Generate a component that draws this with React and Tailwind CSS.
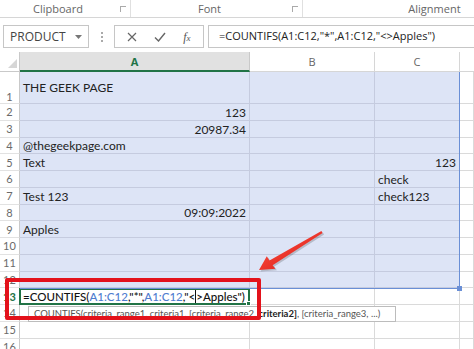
import React from "react";

const cellFont = { fontFamily: "Lato, 'Open Sans', sans-serif" };

const rows = [
  { n: 1, h: "h-[32px]", a: "THE GEEK PAGE", tall: true },
  { n: 2, a: "123", aRight: true },
  { n: 3, a: "20987.34", aRight: true },
  { n: 4, a: "@thegeekpage.com" },
  { n: 5, a: "Text", c: "123", cRight: true },
  { n: 6, c: "check" },
  { n: 7, a: "Test 123", c: "check123" },
  { n: 8, a: "09:09:2022", aRight: true },
  { n: 9, a: "Apples" },
  { n: 10 },
  { n: 11 },
  { n: 12 },
  { n: 13, edit: true },
  { n: 14 },
  { n: 15 },
  { n: 16 },
];

function Cell({ text, right, w, sel, tall }) {
  return (
    <div
      className={`${w} shrink-0 h-full flex ${tall ? "items-center" : "items-end pb-[1px]"} ${
        right ? "justify-end pr-[3px]" : "justify-start pl-[3px]"
      } border-r border-b ${sel ? "bg-[#dde4f6] border-[#c5cbdf]" : "bg-white border-[#dadada]"} text-[12px] text-[#222] leading-none overflow-hidden whitespace-nowrap`}
    >
      {text}
    </div>
  );
}

function EditCell() {
  return (
    <div className="w-[231px] shrink-0 h-full relative bg-white border-2 border-[#217346] -ml-[1px] flex items-center pl-[2px] text-[11.5px] font-medium text-[#111] whitespace-nowrap leading-none">
      <span>=COUNTIFS(</span>
      <span className="text-[#4f7ccf]">A1:C12</span>
      <span>,"*",</span>
      <span className="text-[#4f7ccf]">A1:C12</span>
      <span>,"&lt;</span>
      <span className="inline-block w-[1px] h-[13px] bg-[#111]"></span>
      <span>&gt;Apples")</span>
      <div className="absolute -right-[3px] -bottom-[3px] w-[5px] h-[5px] bg-[#217346] border border-white"></div>
    </div>
  );
}

function Row({ r }) {
  const sel = r.n <= 12;
  return (
    <div className={`flex ${r.h || "h-[16.75px]"}`}>
      <div
        className={`w-[20px] shrink-0 h-full flex ${r.tall ? "items-end pb-[1px]" : "items-center"} justify-center border-r border-b border-r-[#c9c9c9] border-b-[#e2e2e2] bg-white text-[11px] leading-none ${
          r.edit ? "text-[#217346] font-bold" : "text-[#6a6a6a]"
        }`}
      >
        {r.n}
      </div>
      {r.edit ? (
        <EditCell />
      ) : (
        <Cell text={r.a} right={r.aRight} w="w-[230px]" sel={sel} tall={r.tall} />
      )}
      <Cell w="w-[125px]" sel={sel} />
      <Cell text={r.c} right={r.cRight} w="w-[85px]" sel={sel} />
      <Cell w="flex-1" />
    </div>
  );
}

export default function App() {
  return (
    <div
      className="w-[474px] h-[349px] overflow-hidden bg-white relative"
      style={{ fontFamily: "'Open Sans', 'Noto Sans', sans-serif" }}
    >
      {/* ribbon group labels */}
      <div className="h-[18px] flex border-b border-[#d6d6d6] text-[11px] text-[#666] leading-none">
        <div className="w-[131px] flex items-center relative border-r border-[#e0e0e0]">
          <span className="w-full text-center pr-[14px]">Clipboard</span>
          <span className="absolute right-[4px] top-[6px] w-[6px] h-[6px] border-l border-t border-[#aaa]"></span>
        </div>
        <div className="w-[172px] flex items-center relative border-r border-[#e0e0e0]">
          <span className="w-full text-center pr-[14px]">Font</span>
          <span className="absolute right-[4px] top-[6px] w-[6px] h-[6px] border-l border-t border-[#aaa]"></span>
        </div>
        <div className="flex-1 flex items-center">
          <span className="w-full text-center pl-[92px]">Alignment</span>
        </div>
      </div>

      {/* formula bar */}
      <div className="h-[34px] flex items-start pt-[7px] pl-[3px] gap-0">
        <div className="w-[86px] h-[23px] border border-[#c6c6c6] flex items-center justify-between pl-[6px] pr-[6px] text-[12px] text-[#444]">
          <span>PRODUCT</span>
          <svg width="7" height="4" viewBox="0 0 7 4">
            <path d="M0 0 L7 0 L3.5 4 Z" fill="#777" />
          </svg>
        </div>
        <div className="w-[25px] h-[23px] flex flex-col items-center justify-center gap-[2px]">
          <span className="w-[2px] h-[2px] bg-[#aaa]"></span>
          <span className="w-[2px] h-[2px] bg-[#aaa]"></span>
          <span className="w-[2px] h-[2px] bg-[#aaa]"></span>
        </div>
        <div className="w-[90px] h-[23px] border border-[#c6c6c6] flex items-center justify-around px-[4px]">
          <svg width="10" height="10" viewBox="0 0 10 10">
            <path d="M1 1 L9 9 M9 1 L1 9" stroke="#666" strokeWidth="1.2" />
          </svg>
          <svg width="12" height="10" viewBox="0 0 12 10">
            <path d="M1 5.5 L4.5 9 L11 1" stroke="#666" strokeWidth="1.4" fill="none" />
          </svg>
          <span className="text-[12px] text-[#555] italic" style={{ fontFamily: "'Liberation Serif', serif" }}>
            f<span className="text-[9px]">x</span>
          </span>
        </div>
        <div className="flex-1 ml-[4px] h-[23px] border border-[#c6c6c6] border-r-0 flex items-center pl-[10px] text-[11px] text-[#222] whitespace-nowrap">
          =COUNTIFS(A1:C12,"*",A1:C12,"&lt;&gt;Apples")
        </div>
      </div>

      {/* column headers */}
      <div className="flex h-[20px] text-[11px] leading-none">
        <div className="w-[20px] shrink-0 border-r border-b border-[#c9c9c9] relative">
          <svg className="absolute right-[2px] bottom-[3px]" width="9" height="9" viewBox="0 0 9 9">
            <path d="M9 0 L9 9 L0 9 Z" fill="#d6d6d6" />
          </svg>
        </div>
        <div className="w-[230px] shrink-0 bg-[#e1e1e1] border-r border-[#c9c9c9] border-b-2 border-b-[#217346] flex items-center justify-center font-bold text-[#217346]">
          A
        </div>
        <div className="w-[125px] shrink-0 bg-white border-r border-b border-[#d6d6d6] flex items-center justify-center text-[#666]">
          B
        </div>
        <div className="w-[85px] shrink-0 bg-white border-r border-b border-[#d6d6d6] flex items-center justify-center text-[#666]">
          C
        </div>
        <div className="flex-1 border-b border-[#d6d6d6]"></div>
      </div>

      {/* grid */}
      <div style={cellFont}>
        {rows.map((r) => (
          <Row key={r.n} r={r} />
        ))}
      </div>

      {/* selection outline A1:C12 */}
      <div className="absolute left-[20px] top-[72px] w-[440px] h-[217px] border-r-[1.5px] border-b-[1.5px] border-[#6a8fd6] pointer-events-none">
        <div className="absolute -right-[3px] -bottom-[3px] w-[5px] h-[5px] bg-[#6a8fd6]"></div>
      </div>

      {/* function tooltip */}
      <div
        className="absolute left-[28px] top-[306px] w-[368px] h-[16px] bg-white border border-[#bcbcbc] flex items-center pl-[5px] text-[9.5px] text-[#555] whitespace-nowrap leading-none"
        style={cellFont}
      >
        COUNTIFS(criteria_range1, criteria1, [criteria_range2,&nbsp;
        <span className="font-bold text-[#222]">criteria2]</span>, [criteria_range3, ...)
      </div>

      {/* red highlight box */}
      <div className="absolute left-[5px] top-[278px] w-[256px] h-[42px] border-[4px] border-[#e3121b] rounded-[2px] pointer-events-none"></div>

      {/* red arrow */}
      <svg className="absolute left-0 top-0 pointer-events-none" width="474" height="349" viewBox="0 0 474 349">
        <defs>
          <linearGradient id="ag" x1="0" y1="0" x2="1" y2="1">
            <stop offset="0" stopColor="#ff5a4a" />
            <stop offset="1" stopColor="#d9120e" />
          </linearGradient>
        </defs>
        <polygon
          points="259,270 275.5,268.8 272.6,265.2 322.6,233 321.4,231 269.5,260.4 266.8,256.2"
          fill="#000"
          opacity="0.18"
          transform="translate(1.5,1.5)"
        />
        <polygon
          points="259,270 275.5,268.8 272.6,265.2 322.6,233 321.4,231 269.5,260.4 266.8,256.2"
          fill="url(#ag)"
        />
      </svg>
    </div>
  );
}
